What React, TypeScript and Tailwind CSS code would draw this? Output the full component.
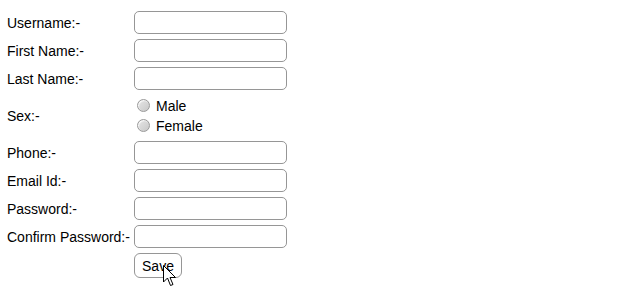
import React from "react";

const inputCls =
  "w-[153px] h-[23px] border border-[#969696] rounded-[5px] bg-white outline-none px-1 text-[14px]";

function Row({ label, type = "text" }: { label: string; type?: string }) {
  return (
    <div className="flex items-center h-[23px]">
      <div className="w-[127px] whitespace-nowrap">{label}</div>
      <input type={type} className={inputCls} />
    </div>
  );
}

function Radio({ label }: { label: string }) {
  return (
    <div className="flex items-center h-[20px]">
      <span className="ml-[3px] w-[13px] h-[13px] rounded-full border border-[#9a9a9a] bg-gradient-to-br from-[#e6e6e6] to-[#c8c8c8] shadow-[inset_1px_1px_1px_rgba(255,255,255,0.8)]" />
      <span className="ml-[6px]">{label}</span>
    </div>
  );
}

export default function App() {
  return (
    <div
      className="relative w-[626px] h-[304px] bg-white text-black text-[14px] leading-[16px] pl-[7px] pt-[11px]"
      style={{ fontFamily: '"Liberation Sans", Arial, sans-serif' }}
    >
      <div className="flex flex-col gap-[5px]">
        <Row label="Username:-" />
        <Row label="First Name:-" />
        <Row label="Last Name:-" />
        <div className="flex items-center h-[41px]">
          <div className="w-[127px]">Sex:-</div>
          <div className="flex flex-col">
            <Radio label="Male" />
            <Radio label="Female" />
          </div>
        </div>
        <Row label="Phone:-" />
        <Row label="Email Id:-" />
        <Row label="Password:-" type="password" />
        <Row label="Confirm Password:-" type="password" />
        <div className="flex h-[25px]">
          <div className="w-[127px]" />
          <button className="h-[25px] w-[48px] border border-[#969696] rounded-[6px] bg-white text-[14px] text-black flex items-center justify-center">
            Save
          </button>
        </div>
      </div>
      <svg
        className="absolute left-[163px] top-[265px]"
        width="14"
        height="23"
        viewBox="0 0 14 23"
      >
        <path
          d="M0.5 0.5 L0.5 17 L4.5 13 L7.5 20.5 L10 19.5 L7 12.5 L12.5 12.5 Z"
          fill="white"
          stroke="black"
          strokeWidth="1"
          strokeLinejoin="miter"
        />
      </svg>
    </div>
  );
}
